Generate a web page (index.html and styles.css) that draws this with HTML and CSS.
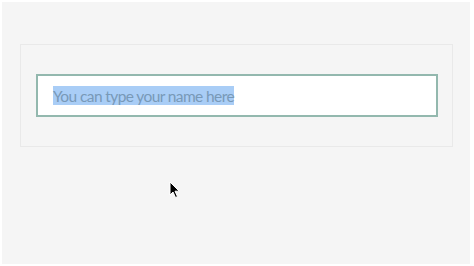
FILE: index.html
```html
<!DOCTYPE html>
<html>
<head>
<meta charset="utf-8">
<link rel="stylesheet" href="styles.css">
</head>
<body>
<div class="screen">
  <div class="panel">
    <div class="field">
      <span class="placeholder">You can type your name here</span>
    </div>
  </div>
  <svg class="cursor" width="12" height="18" viewBox="0 0 12 18">
    <path d="M1 1 L1 14 L4 11 L6.5 16.5 L8.5 15.6 L6 10.2 L10.2 10.2 Z" fill="#000" stroke="#fff" stroke-width="1"/>
  </svg>
</div>
</body>
</html>
```
FILE: styles.css
```css
html, body {
  margin: 0;
  padding: 0;
  background: #ffffff;
}
.screen {
  position: relative;
  margin: 2px 4px 2px 2px;
  height: 262px;
  background: #f5f5f5;
  padding-top: 42px;
  box-sizing: border-box;
}
.panel {
  margin-left: 18px;
  width: 433px;
  height: 103px;
  box-sizing: border-box;
  border: 1px solid #e9e9e9;
  padding: 29px 0 0 15px;
}
.field {
  width: 402px;
  height: 43px;
  box-sizing: border-box;
  background: #ffffff;
  border: 2px solid #93b8ae;
  display: flex;
  align-items: center;
  padding-left: 15px;
  font-family: Lato, "Open Sans", sans-serif;
  font-size: 15.5px;
  letter-spacing: -0.6px;
}
.placeholder {
  color: #7899b8;
  background: #a9cdf6;
  line-height: 18px;
  padding-top: 1px;
}
.cursor {
  position: absolute;
  left: 167px;
  top: 179px;
}
```
